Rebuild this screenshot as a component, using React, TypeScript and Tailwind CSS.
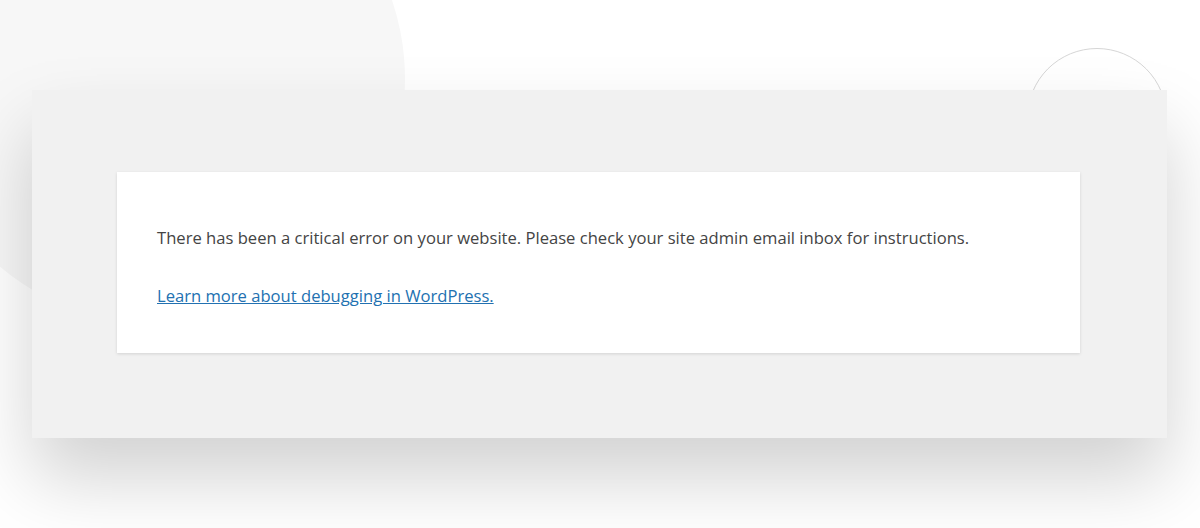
export default function App() {
  return (
    <div className="relative w-[1200px] h-[528px] overflow-hidden bg-white" style={{ fontFamily: '"Open Sans", "Noto Sans", sans-serif' }}>
      {/* decorative background shapes */}
      <div className="absolute left-[-87px] top-[-167px] w-[492px] h-[492px] rounded-full bg-[#f7f7f7]" />
      <div className="absolute left-[1027px] top-[48px] w-[140px] h-[140px] rounded-full border border-[#d6d6d6]" />

      <div className="relative ml-[32px] mt-[90px] w-[1135px] h-[348px] bg-[#f1f1f1] pt-[82px] pl-[85px] shadow-[0_40px_70px_rgba(0,0,0,0.18)]">
        <div className="w-[963px] h-[181px] bg-white px-[40px] pt-[55px] shadow-[0_1px_3px_rgba(0,0,0,0.13)] text-[16.6px] leading-[22px]">
          <p className="text-[#444]">
            There has been a critical error on your website. Please check your site admin email inbox for instructions.
          </p>
          <p className="mt-[36px]">
            <a href="#" className="text-[#2271b1] underline">Learn more about debugging in WordPress.</a>
          </p>
        </div>
      </div>
    </div>
  )
}
